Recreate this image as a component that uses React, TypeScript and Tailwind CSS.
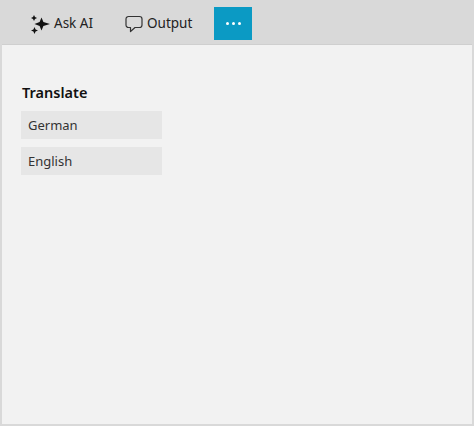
import React from 'react';

const SparkIcon = () => (
  <svg width="20" height="20" viewBox="0 0 20 20" fill="#111">
    <path d="M11.5 3.5 L13.4 8.1 L20 10 L13.4 11.9 L11.5 16.5 L9.6 11.9 L4.5 10 L9.6 8.1 Z" />
    <path d="M4 1 L5 3 L7 4 L5 5 L4 7 L3 5 L1 4 L3 3 Z" />
    <path d="M4.5 13 L5.6 15.4 L8 16.5 L5.6 17.6 L4.5 20 L3.4 17.6 L1 16.5 L3.4 15.4 Z" />
  </svg>
);

const ChatIcon = () => (
  <svg width="18" height="18" viewBox="0 0 18 18" fill="none" stroke="#333" strokeWidth="1.2" strokeLinejoin="round">
    <path d="M3.5 1.5 H14.5 A2.5 2.5 0 0 1 17 4 V10 A2.5 2.5 0 0 1 14.5 12.5 H10 L5.5 16.5 V12.5 H3.5 A2.5 2.5 0 0 1 1 10 V4 A2.5 2.5 0 0 1 3.5 1.5 Z" />
  </svg>
);

const App: React.FC = () => {
  return (
    <div className="w-[474px] h-[426px] bg-[#f2f2f2] border-x-2 border-b-2 border-[#d9d9d9] flex flex-col font-['Noto_Sans',sans-serif] text-[#333] overflow-hidden">
      <header className="h-[45px] shrink-0 bg-[#d9d9d9] border-b border-[#cfcfcf] flex items-center pl-[28px] pt-[3px]">
        <div className="flex items-center gap-[4px] text-[13.5px] text-[#222]">
          <SparkIcon />
          <span>Ask AI</span>
        </div>
        <div className="flex items-center gap-[4px] text-[13.5px] text-[#222] ml-[32px]">
          <ChatIcon />
          <span>Output</span>
        </div>
        <div className="w-[38px] h-[33px] bg-[#0b9ac4] ml-[22px] flex items-center justify-center gap-[3px]">
          <span className="w-[3px] h-[3px] rounded-full bg-white" />
          <span className="w-[3px] h-[3px] rounded-full bg-white" />
          <span className="w-[3px] h-[3px] rounded-full bg-white" />
        </div>
      </header>
      <main className="pt-[36px] pl-[19px]">
        <h2 className="text-[14.5px] leading-[22px] font-semibold text-[#111] pl-[1px]">Translate</h2>
        <div className="mt-[8px] flex flex-col gap-[8px] w-[141px]">
          <div className="h-[28px] bg-[#e6e6e6] flex items-center pl-[7px] pt-[1px] text-[13px]">German</div>
          <div className="h-[28px] bg-[#e6e6e6] flex items-center pl-[7px] pt-[1px] text-[13px]">English</div>
        </div>
      </main>
    </div>
  );
};

export default App;
